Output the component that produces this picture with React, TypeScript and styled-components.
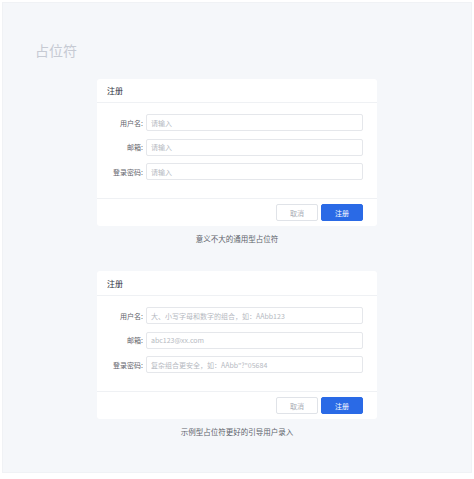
import styled, { createGlobalStyle } from "styled-components";

const GlobalStyle = createGlobalStyle`
  html, body {
    margin: 0;
    padding: 0;
    background: #ffffff;
  }
  * {
    box-sizing: border-box;
  }
  body {
    font-family: "Noto Sans CJK SC", "Noto Sans", "Liberation Sans", sans-serif;
  }
`;

const Panel = styled.div`
  margin: 2px 0 0 2px;
  width: 470px;
  height: 471px;
  background: #f5f7fa;
  border: 1px solid #f0f2f5;
  padding: 40px 0 0 32px;
  display: flex;
  flex-direction: column;
`;

const PageTitle = styled.h1`
  margin: 0;
  font-size: 14px;
  line-height: 15px;
  font-weight: 400;
  color: #c6cad3;
`;

const Section = styled.div<{ $top: number }>`
  margin-top: ${(props) => props.$top}px;
  margin-left: 62px;
  width: 280px;
  display: flex;
  flex-direction: column;
  align-items: center;
`;

const Card = styled.div`
  width: 100%;
  background: #ffffff;
  border-radius: 3px;
  display: flex;
  flex-direction: column;
`;

const CardHeader = styled.div<{ $height: number }>`
  height: ${(props) => props.$height}px;
  padding-left: 10px;
  display: flex;
  align-items: center;
  border-bottom: 1px solid #eff1f4;
  font-size: 8px;
  font-weight: 400;
  color: #2e3238;
`;

const CardBody = styled.div`
  padding: 11px 14px 17.5px 0;
  display: flex;
  flex-direction: column;
  gap: 7.6px;
`;

const Row = styled.div`
  display: flex;
  align-items: center;
`;

const Label = styled.label`
  width: 46px;
  margin-right: 3px;
  text-align: right;
  font-size: 7px;
  color: #5f636b;
  white-space: nowrap;
`;

const Input = styled.input`
  flex: 1;
  height: 17px;
  padding: 0 4px;
  border: 1px solid #e5e7eb;
  border-radius: 2px;
  font-family: inherit;
  font-size: 7px;
  color: #333333;
  outline: none;
  background: #ffffff;
  &::placeholder {
    color: #b5b9c1;
  }
`;

const CardFooter = styled.div`
  padding: 5.5px 14px 5px;
  border-top: 1px solid #eff1f4;
  display: flex;
  justify-content: flex-end;
  gap: 3px;
`;

const Button = styled.button<{ $primary?: boolean }>`
  width: 42px;
  height: 17px;
  padding: 0;
  border-radius: 2px;
  font-family: inherit;
  font-size: 7px;
  border: 1px solid ${(props) => (props.$primary ? "#2a6ae6" : "#e0e3e8")};
  background: ${(props) => (props.$primary ? "#2a6ae6" : "#ffffff")};
  color: ${(props) => (props.$primary ? "#ffffff" : "#a9adb5")};
`;

const Caption = styled.p`
  margin: 7.5px 0 0;
  font-size: 7.5px;
  line-height: 10px;
  color: #60646c;
`;

interface IField {
  label: string;
  placeholder: string;
}

interface IFormProps {
  top: number;
  headerHeight: number;
  fields: IField[];
  caption: string;
}

function RegisterForm({ top, headerHeight, fields, caption }: IFormProps) {
  return (
    <Section $top={top}>
      <Card>
        <CardHeader $height={headerHeight}>注册</CardHeader>
        <CardBody>
          {fields.map((field) => (
            <Row key={field.label}>
              <Label>{field.label}:</Label>
              <Input placeholder={field.placeholder} />
            </Row>
          ))}
        </CardBody>
        <CardFooter>
          <Button>取消</Button>
          <Button $primary>注册</Button>
        </CardFooter>
      </Card>
      <Caption>{caption}</Caption>
    </Section>
  );
}

const generic: IField[] = [
  { label: "用户名", placeholder: "请输入" },
  { label: "邮箱", placeholder: "请输入" },
  { label: "登录密码", placeholder: "请输入" },
];

const example: IField[] = [
  { label: "用户名", placeholder: "大、小写字母和数字的组合，如：AAbb123" },
  { label: "邮箱", placeholder: "abc123@xx.com" },
  { label: "登录密码", placeholder: "复杂组合更安全，如：AAbb\"?\"05684" },
];

export default function App() {
  return (
    <>
      <GlobalStyle />
      <Panel>
        <PageTitle>占位符</PageTitle>
        <RegisterForm
          top={21}
          headerHeight={24}
          fields={generic}
          caption="意义不大的通用型占位符"
        />
        <RegisterForm
          top={27.5}
          headerHeight={25}
          fields={example}
          caption="示例型占位符更好的引导用户录入"
        />
      </Panel>
    </>
  );
}
